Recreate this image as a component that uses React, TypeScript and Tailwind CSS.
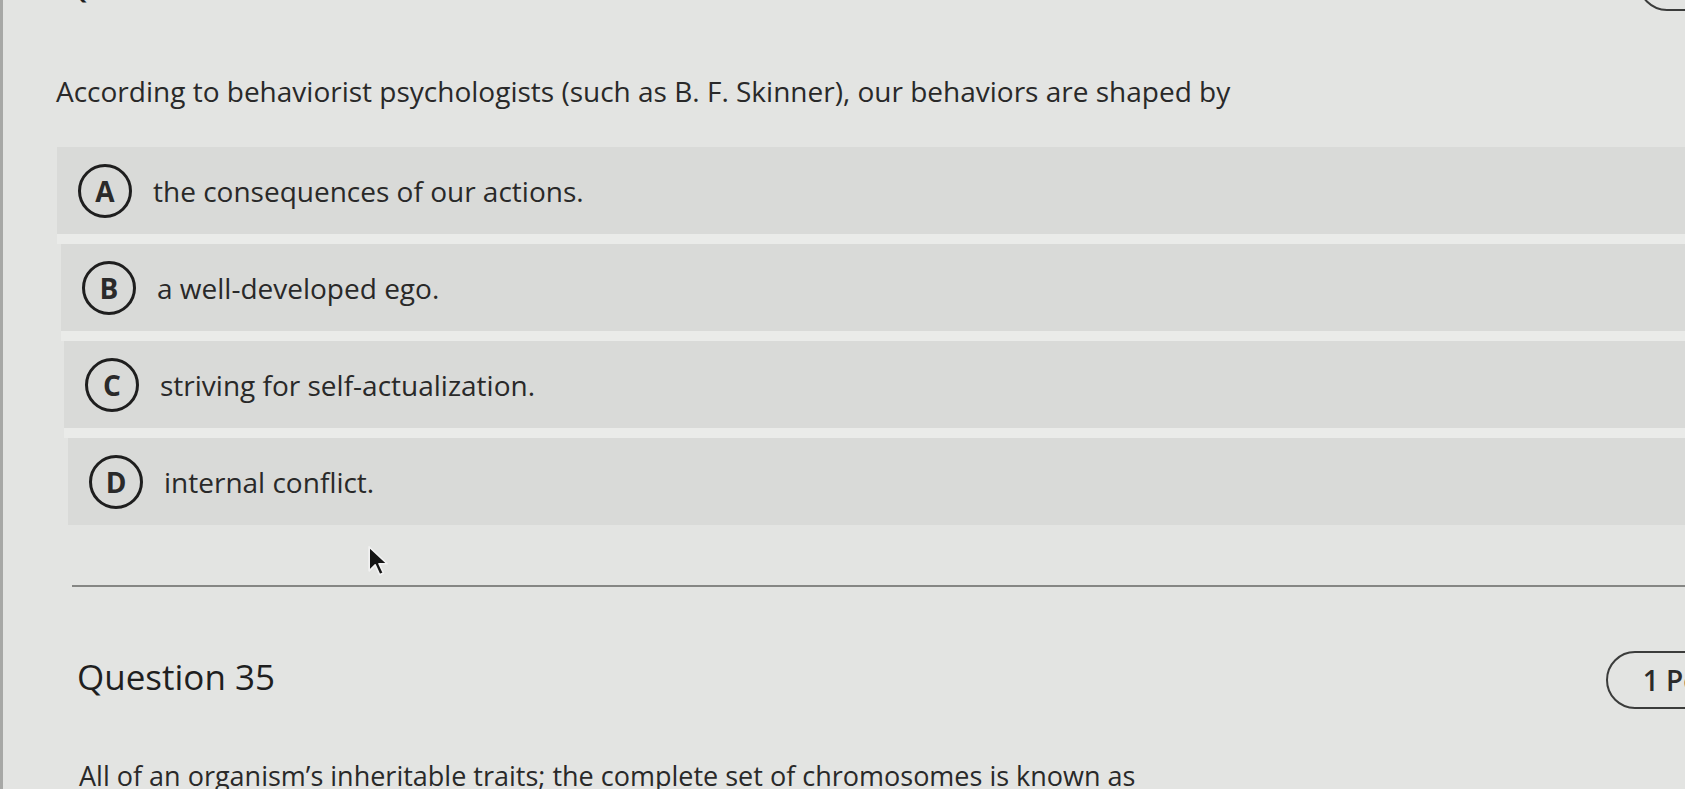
import React from "react";

const options = [
  { letter: "A", text: "the consequences of our actions.", indent: "ml-0" },
  { letter: "B", text: "a well-developed ego.", indent: "ml-[4px]" },
  { letter: "C", text: "striving for self-actualization.", indent: "ml-[7px]" },
  { letter: "D", text: "internal conflict.", indent: "ml-[11px]" },
];

function PointsPill({ offset }: { offset: string }) {
  return (
    <div
      className={`ml-auto ${offset} flex h-[58px] shrink-0 items-center rounded-full border-2 border-[#3b3c3b] px-[35px] text-[28px] font-semibold text-[#2b2b2b]`}
    >
      1 Point
    </div>
  );
}

function Cursor() {
  return (
    <svg
      className="absolute left-[364px] top-[544px]"
      width="24"
      height="34"
      viewBox="0 0 22 30"
    >
      <path
        d="M2 2 L2 24 L7.5 18.5 L11.5 27.5 L15 26 L11 17.5 L18.5 17.5 Z"
        fill="#151515"
        stroke="#f2f2f2"
        strokeWidth="1.5"
        strokeLinejoin="round"
      />
    </svg>
  );
}

export default function App() {
  return (
    <div className="relative h-[789px] w-full overflow-hidden border-l-[3px] border-[#a7a8a6] bg-[#e3e4e2] font-['Open_Sans',sans-serif] text-[#292929]">
      <div className="w-[1780px]">
        {/* previous question header, mostly scrolled off the top */}
        <div className="mt-[-47px] flex h-[58px] items-center">
          <h2 className="ml-[60px] pt-[2px] text-[35px] font-medium leading-none text-[#1f1f1f]">
            Question 34
          </h2>
          <PointsPill offset="mr-[-23px]" />
        </div>

        <p className="ml-[53px] mt-[61px] text-[28px] leading-[38px]">
          According to behaviorist psychologists (such as B. F. Skinner), our
          behaviors are shaped by
        </p>

        <div className="ml-[54px] mt-[37px] flex flex-col">
          {options.map((o, i) => (
            <div
              key={o.letter}
              className={`${o.indent} ${
                i < options.length - 1 ? "h-[97px] border-b-[10px] border-[#eaebe9]" : "h-[87px]"
              } flex items-center gap-[21px] bg-[#d9dad8] pl-[21px]`}
            >
              <span className="flex h-[54px] w-[54px] shrink-0 items-center justify-center rounded-full border-[3px] border-[#1e1e1e] text-[28px] font-bold leading-none text-[#2a2a2a]">
                {o.letter}
              </span>
              <span className="text-[28px] leading-[38px]">{o.text}</span>
            </div>
          ))}
        </div>

        <div className="ml-[69px] mt-[60px] h-[2px] bg-[#858684]" />

        <div className="mt-[64px] flex h-[58px] items-center">
          <h2 className="ml-[74px] pb-[8px] text-[35px] font-medium leading-none text-[#1f1f1f]">
            Question 35
          </h2>
          <PointsPill offset="mr-[9px]" />
        </div>

        <p className="ml-[76px] mt-[48px] text-[27px] leading-[38px]">
          All of an organism’s inheritable traits; the complete set of
          chromosomes is known as
        </p>
      </div>

      <Cursor />
    </div>
  );
}
